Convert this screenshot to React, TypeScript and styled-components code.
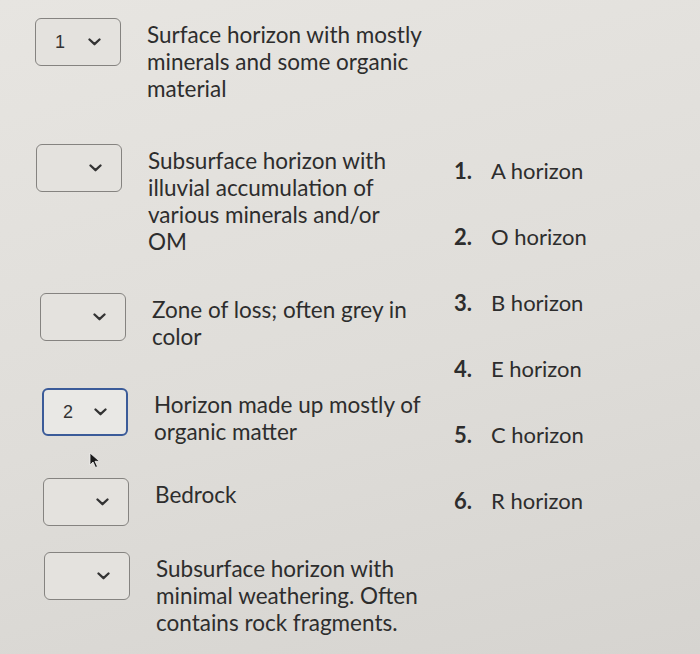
import React from 'react';
import styled, { createGlobalStyle } from 'styled-components';

const GlobalStyle = createGlobalStyle`
  html, body {
    margin: 0;
    padding: 0;
  }
  body {
    background: #dedcd8;
    font-family: Lato, "Open Sans", sans-serif;
    color: #2d2d2d;
  }
`;

const Page = styled.div`
  position: relative;
  width: 700px;
  height: 654px;
  overflow: hidden;
  display: flex;
  background: linear-gradient(165deg, #e7e5e1 0%, #dfddd9 55%, #d6d4d0 100%);
`;

const LeftColumn = styled.div`
  width: 440px;
  padding-top: 18px;
  display: flex;
  flex-direction: column;
`;

const Row = styled.div<{ $space: number; $indent: number }>`
  display: flex;
  align-items: flex-start;
  gap: 26px;
  padding-left: ${({ $indent }) => $indent}px;
  margin-bottom: ${({ $space }) => $space}px;
`;

const Select = styled.div<{ $focused?: boolean }>`
  box-sizing: border-box;
  flex: none;
  width: 86px;
  height: 48px;
  border-radius: 6px;
  border: ${({ $focused }) => ($focused ? '2px solid #3b5b99' : '1px solid #858380')};
  background: ${({ $focused }) => ($focused ? '#e9e8e5' : '#e4e2de')};
  display: flex;
  align-items: center;
  padding: 0 19px 0 19px;
`;

const SelectValue = styled.span`
  flex: 1;
  font-family: "Liberation Sans", Arial, sans-serif;
  font-size: 18px;
  color: #333;
`;

const Chevron = styled.svg`
  width: 13px;
  height: 8px;
  flex: none;
`;

const Description = styled.div`
  padding-top: 3px;
  font-size: 22.5px;
  line-height: 27px;
  white-space: nowrap;
`;

const Options = styled.ol`
  list-style: none;
  margin: 0;
  padding: 158px 0 0 14px;
`;

const Option = styled.li`
  display: flex;
  font-size: 22px;
  line-height: 26px;
  margin-bottom: 40px;
`;

const Marker = styled.span`
  width: 37px;
  font-weight: 700;
`;

const Cursor = styled.svg`
  position: absolute;
  left: 89px;
  top: 452px;
  width: 12px;
  height: 17px;
`;

const rows = [
  { value: '1', lines: ['Surface horizon with mostly', 'minerals and some organic', 'material'], space: 42, indent: 35 },
  { value: '', lines: ['Subsurface horizon with', 'illuvial accumulation of', 'various minerals and/or', 'OM'], space: 38, indent: 36 },
  { value: '', lines: ['Zone of loss; often grey in', 'color'], space: 38, indent: 40 },
  { value: '2', lines: ['Horizon made up mostly of', 'organic matter'], space: 33, indent: 42, focused: true },
  { value: '', lines: ['Bedrock'], space: 26, indent: 43 },
  { value: '', lines: ['Subsurface horizon with', 'minimal weathering. Often', 'contains rock fragments.'], space: 0, indent: 44 },
];

const options = ['A horizon', 'O horizon', 'B horizon', 'E horizon', 'C horizon', 'R horizon'];

export default function App() {
  return (
    <>
      <GlobalStyle />
      <Page>
        <LeftColumn>
          {rows.map((row, i) => (
            <Row key={i} $space={row.space} $indent={row.indent}>
              <Select $focused={row.focused}>
                <SelectValue>{row.value}</SelectValue>
                <Chevron viewBox="0 0 13 8">
                  <polyline points="1.5,1.5 6.5,6.2 11.5,1.5" fill="none" stroke="#333" strokeWidth="2.3" strokeLinecap="round" strokeLinejoin="round" />
                </Chevron>
              </Select>
              <Description>
                {row.lines.map((line, j) => (
                  <React.Fragment key={j}>
                    {j > 0 && <br />}
                    {line}
                  </React.Fragment>
                ))}
              </Description>
            </Row>
          ))}
        </LeftColumn>
        <Options>
          {options.map((opt, i) => (
            <Option key={opt}>
              <Marker>{i + 1}.</Marker>
              {opt}
            </Option>
          ))}
        </Options>
        <Cursor viewBox="0 0 12 17">
          <path d="M1 1 L1 13 L4 10 L6.5 15.5 L8.5 14.6 L6 9.3 L10.5 9.3 Z" fill="#1a1a1a" stroke="#f2f2f2" strokeWidth="0.8" />
        </Cursor>
      </Page>
    </>
  );
}
